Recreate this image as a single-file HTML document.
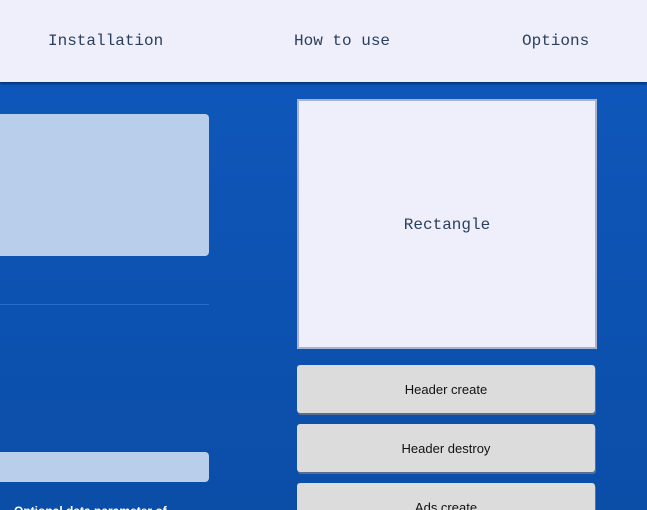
<!DOCTYPE html>
<html><head><meta charset="utf-8"><style>
html,body{margin:0;padding:0;width:647px;height:510px;overflow:hidden}
body{background:linear-gradient(#0f58bd,#0b4ea8);position:relative;font-family:"Liberation Sans",sans-serif}
.hdr{position:absolute;left:0;top:0;width:647px;height:82px;background:#eeeffb;box-shadow:0 2px 2px rgba(0,30,80,.6)}
.hdr span{position:absolute;top:32px;font-family:"Liberation Mono",monospace;font-size:16px;color:#2a3f5c}
.p1{position:absolute;left:-10px;top:114px;width:219px;height:142px;background:#b8ceeb;border-radius:4px}
.line{position:absolute;left:0;top:304px;width:209px;height:1px;background:#2a6ccc}
.p2{position:absolute;left:-10px;top:452px;width:219px;height:30px;background:#b8ceeb;border-radius:4px}
.rect{position:absolute;left:297px;top:99px;width:296px;height:246px;background:#eeeffb;border:2px solid #a9b4cc;display:flex;align-items:center;justify-content:center;font-family:"Liberation Mono",monospace;font-size:16px;color:#2a3f5c;padding-top:2px;box-sizing:content-box}
.rect{height:244px}
.btn{position:absolute;left:297px;width:298px;height:48px;background:#dcdcdc;border-radius:3px;box-shadow:1px 2px 0 #5a6e90;display:flex;align-items:center;justify-content:center;font-size:13px;color:#111}
.txt{position:absolute;left:14px;top:504px;color:#fff;font-size:12px;font-weight:bold}
</style></head><body>
<div class="hdr"><span style="left:48px">Installation</span><span style="left:294px">How to use</span><span style="left:522px">Options</span></div>
<div class="p1"></div>
<div class="line"></div>
<div class="p2"></div>
<div class="txt">Optional data parameter of</div>
<div class="rect">Rectangle</div>
<div class="btn" style="top:365px;padding-top:1px;height:47px">Header create</div>
<div class="btn" style="top:424px;padding-top:1px;height:47px">Header destroy</div>
<div class="btn" style="top:483px;align-items:flex-start"><span style="margin-top:17px">Ads create</span></div>
</body></html>
